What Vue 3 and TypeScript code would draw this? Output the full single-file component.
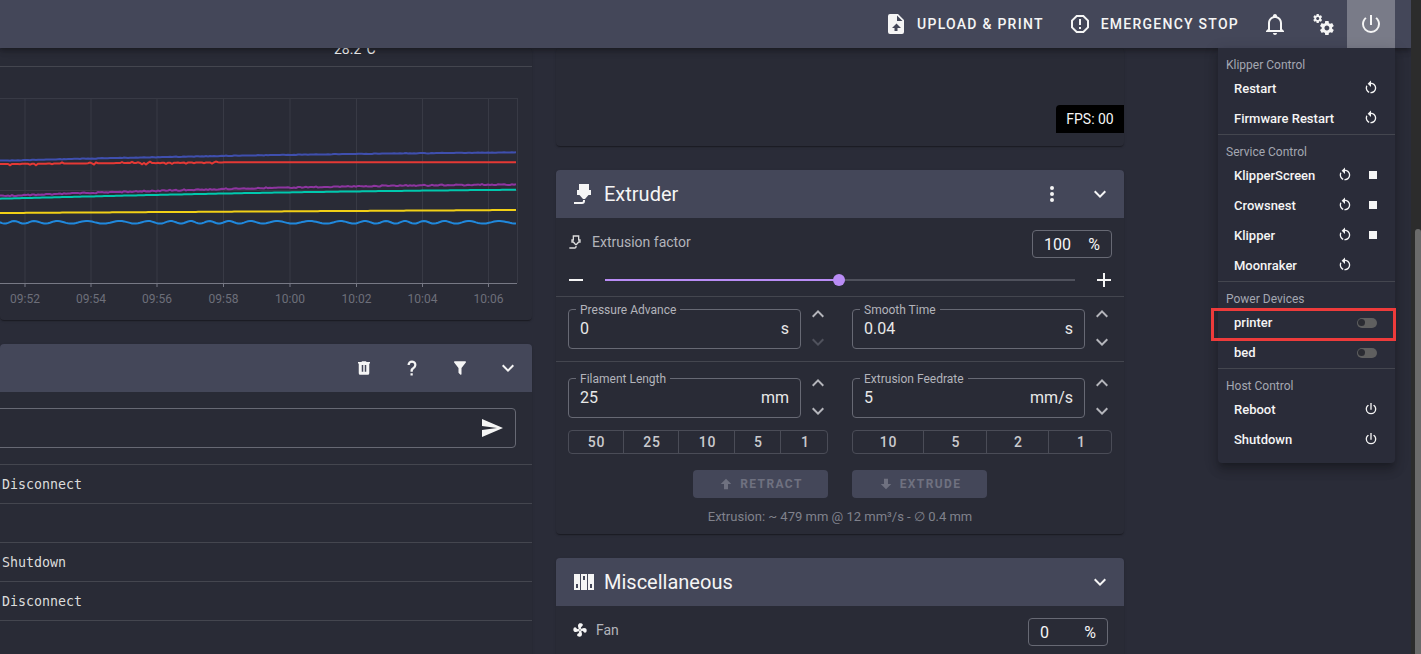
<script setup lang="ts">
// mdi paths
const icons = {
  upload: "M14,2H6A2,2 0 0,0 4,4V20A2,2 0 0,0 6,22H18A2,2 0 0,0 20,20V8L14,2M13.5,16V19H10.5V16H8L12.5,11.5L17,16H13.5M13,9V3.5L18.5,9H13Z",
  alert: "M8.27,3L3,8.27V15.73L8.27,21H15.73L21,15.73V8.27L15.73,3M9.1,5H14.9L19,9.1V14.9L14.9,19H9.1L5,14.9V9.1M11,15H13V17H11V15M11,7H13V13H11V7",
  bell: "M10 21H14C14 22.1 13.1 23 12 23S10 22.1 10 21M21 19V20H3V19L5 17V11C5 7.9 7 5.2 10 4.3V4C10 2.9 10.9 2 12 2S14 2.9 14 4V4.3C17 5.2 19 7.9 19 11V17L21 19M17 11C17 8.2 14.8 6 12 6S7 8.2 7 11V18H17V11Z",
  cogs: "M15.9,18.45C17.25,18.45 18.35,17.35 18.35,16C18.35,14.65 17.25,13.55 15.9,13.55C14.54,13.55 13.45,14.65 13.45,16C13.45,17.35 14.54,18.45 15.9,18.45M21.1,16.68L22.58,17.84C22.71,17.95 22.75,18.13 22.66,18.29L21.26,20.71C21.17,20.86 21,20.92 20.83,20.86L19.09,20.16C18.73,20.44 18.34,20.67 17.91,20.85L17.64,22.7C17.61,22.87 17.47,23 17.3,23H14.5C14.32,23 14.18,22.87 14.15,22.7L13.89,20.85C13.46,20.67 13.07,20.44 12.71,20.16L10.96,20.86C10.81,20.92 10.62,20.86 10.54,20.71L9.14,18.29C9.05,18.13 9.09,17.95 9.22,17.84L10.7,16.68L10.65,16L10.7,15.31L9.22,14.16C9.09,14.05 9.05,13.86 9.14,13.71L10.54,11.29C10.62,11.13 10.81,11.07 10.96,11.13L12.71,11.84C13.07,11.56 13.46,11.32 13.89,11.15L14.15,9.29C14.18,9.13 14.32,9 14.5,9H17.3C17.47,9 17.61,9.13 17.64,9.29L17.91,11.15C18.34,11.32 18.73,11.56 19.09,11.84L20.83,11.13C21,11.07 21.17,11.13 21.26,11.29L22.66,13.71C22.75,13.86 22.71,14.05 22.58,14.16L21.1,15.31L21.15,16L21.1,16.68M6.69,8.07C7.56,8.07 8.26,7.37 8.26,6.5C8.26,5.63 7.56,4.92 6.69,4.92A1.58,1.58 0 0,0 5.11,6.5C5.11,7.37 5.82,8.07 6.69,8.07M10.03,6.94L11,7.68C11.07,7.75 11.09,7.87 11.03,7.97L10.13,9.53C10.08,9.63 9.96,9.67 9.86,9.63L8.74,9.18L8,9.62L7.81,10.81C7.79,10.92 7.7,11 7.59,11H5.79C5.67,11 5.58,10.92 5.56,10.81L5.4,9.62L4.64,9.18L3.5,9.63C3.41,9.67 3.3,9.63 3.24,9.53L2.34,7.97C2.28,7.87 2.31,7.75 2.39,7.68L3.34,6.94L3.31,6.5L3.34,6.06L2.39,5.32C2.31,5.25 2.28,5.13 2.34,5.03L3.24,3.47C3.3,3.37 3.41,3.33 3.5,3.37L4.63,3.82L5.4,3.38L5.56,2.19C5.58,2.08 5.67,2 5.79,2H7.59C7.7,2 7.79,2.08 7.81,2.19L8,3.38L8.74,3.82L9.86,3.37C9.96,3.33 10.08,3.37 10.13,3.47L11.03,5.03C11.09,5.13 11.07,5.25 11,5.32L10.03,6.06L10.06,6.5L10.03,6.94Z",
  power: "M16.56,5.44L15.11,6.89C16.84,7.94 18,9.83 18,12A6,6 0 0,1 12,18A6,6 0 0,1 6,12C6,9.83 7.16,7.94 8.88,6.88L7.44,5.44C5.36,6.88 4,9.28 4,12A8,8 0 0,0 12,20A8,8 0 0,0 20,12C20,9.28 18.64,6.88 16.56,5.44M13,3H11V13H13",
  standby: "M13,3H11V13H13V3M17.83,5.17L16.41,6.59C18.05,7.91 19,9.9 19,12A7,7 0 0,1 12,19C8.12,19 5,15.88 5,12C5,9.93 5.94,7.92 7.58,6.59L6.17,5.17C4.22,6.82 3.08,9.25 3,12A9,9 0 0,0 12,21A9,9 0 0,0 21,12C21,9.25 19.78,6.82 17.83,5.17Z",
  restart: "M12,4C14.1,4 16.1,4.8 17.6,6.3C20.7,9.4 20.7,14.5 17.6,17.6C15.8,19.5 13.3,20.2 10.9,19.9L11.4,17.9C13.1,18.1 14.9,17.5 16.2,16.2C18.5,13.9 18.5,10.1 16.2,7.7C15.1,6.6 13.5,6 12,6V10.6L7,5.6L12,0.6V4M6.3,17.6C3.7,15 3.3,11 5.1,7.9L6.6,9.4C5.5,11.6 5.9,14.4 7.8,16.2C8.3,16.7 8.9,17.1 9.6,17.4L9,19.4C8,19 7.1,18.4 6.3,17.6Z",
  stop: "M18,18H6V6H18V18Z",
  dots: "M12,16A2,2 0 0,1 14,18A2,2 0 0,1 12,20A2,2 0 0,1 10,18A2,2 0 0,1 12,16M12,10A2,2 0 0,1 14,12A2,2 0 0,1 12,14A2,2 0 0,1 10,12A2,2 0 0,1 12,10M12,4A2,2 0 0,1 14,6A2,2 0 0,1 12,8A2,2 0 0,1 10,6A2,2 0 0,1 12,4Z",
  down: "M7.41,8.58L12,13.17L16.59,8.58L18,10L12,16L6,10L7.41,8.58Z",
  up: "M7.41,15.41L12,10.83L16.59,15.41L18,14L12,8L6,14L7.41,15.41Z",
  minus: "M19,13H5V11H19V13Z",
  plus: "M19,13H13V19H11V13H5V11H11V5H13V11H19V13Z",
  trash: "M9,3V4H4V6H5V19A2,2 0 0,0 7,21H17A2,2 0 0,0 19,19V6H20V4H15V3H9M9,8H11V17H9V8M13,8H15V17H13V8Z",
  help: "M10,19H13V22H10V19M12,2C17.35,2.22 19.68,7.62 16.5,11.67C15.67,12.67 14.33,13.33 13.67,14.17C13,15 13,16 13,17H10C10,15.33 10,13.92 10.67,12.92C11.33,11.92 12.67,11.33 13.5,10.67C15.92,8.43 15.32,5.26 12,5A3,3 0 0,0 9,8H6A6,6 0 0,1 12,2Z",
  filter: "M14,12V19.88C14.04,20.18 13.94,20.5 13.71,20.71C13.32,21.1 12.69,21.1 12.3,20.71L10.29,18.7C10.06,18.47 9.96,18.16 10,17.87V12H9.97L4.21,4.62C3.87,4.19 3.95,3.56 4.38,3.22C4.57,3.08 4.78,3 5,3H19C19.22,3 19.43,3.08 19.62,3.22C20.05,3.56 20.13,4.19 19.79,4.62L14.03,12H14Z",
  send: "M2,21L23,12L2,3V10L17,12L2,14V21Z",
  arrowUp: "M15,20H9V12H4.16L12,4.16L19.84,12H15V20Z",
  arrowDown: "M9,4H15V12H19.84L12,19.84L4.16,12H9V4Z",
  nozzle: "M7,2H17V8H19V13H16.5L13,17H11L7.5,13H5V8H7V2M10,22H2V20H10A1,1 0 0,0 11,19V18H13V19A3,3 0 0,1 10,22Z",
  nozzleOutline: "M7 2H17V8H19V13H16.5L13 17H11L7.5 13H5V8H7V2M10 22H2V20H10C10.6 20 11 19.6 11 19V18H13V19C13 20.7 11.7 22 10 22M7 10V11H8.5L12 15L15.5 11H17V10H15V4H9V10H7Z",
  dip: "M2,4H8V20H2V4M4,14V18H6V14H4M9,4H15V20H9V4M11,6V10H13V6H11M16,4H22V20H16V4M18,14V18H20V14H18Z",
  fan: "M12,11A1,1 0 0,0 11,12A1,1 0 0,0 12,13A1,1 0 0,0 13,12A1,1 0 0,0 12,11M12.5,2C17,2 17.11,5.57 14.75,6.75C13.76,7.24 13.32,8.29 13.13,9.22C13.61,9.42 14.03,9.73 14.35,10.13C18.05,8.13 22.03,8.92 22.03,12.5C22.03,17 18.46,17.1 17.28,14.73C16.78,13.74 15.72,13.3 14.79,13.11C14.59,13.59 14.28,14 13.88,14.34C15.87,18.03 15.08,22 11.5,22C7,22 6.91,18.42 9.27,17.24C10.25,16.75 10.69,15.71 10.89,14.79C10.4,14.59 9.97,14.27 9.65,13.87C5.96,15.85 2,15.07 2,11.5C2,7 5.56,6.89 6.74,9.26C7.24,10.25 8.29,10.68 9.22,10.87C9.41,10.39 9.73,9.97 10.14,9.65C8.15,5.96 8.94,2 12.5,2Z"
};

// chart
const ticks = [
  { x: 25, t: "09:52" }, { x: 91, t: "09:54" }, { x: 157, t: "09:56" }, { x: 223.5, t: "09:58" },
  { x: 290, t: "10:00" }, { x: 356.5, t: "10:02" }, { x: 422.5, t: "10:04" }, { x: 488.5, t: "10:06" }
];
function noise(x: number) {
  const n = Math.sin(x * 12.9898) * 43758.5453;
  return n - Math.floor(n);
}
function line(y0: number, y1: number, fn: (x: number) => number) {
  const pts: string[] = [];
  for (let x = 0; x <= 516; x += 2) {
    const y = y0 + (y1 - y0) * (x / 516) + fn(x);
    pts.push(x + "," + y.toFixed(1));
  }
  return pts.join(" ");
}
const bow = (x: number) => Math.sin((Math.PI * x) / 516);
const series = [
  { color: "#3f4fae", pts: line(160.7, 152.3, (x) => -1.2 * bow(x) + (noise(x) - 0.5) * 0.5) },
  { color: "#e53935", pts: line(162.3, 162.3, (x) => (x < 230 ? (1 - x / 230) * 1.7 + (noise(x) > 0.72 ? -1.2 + noise(x + 1) * 3 : 0) : 0)) },
  { color: "#8e35a0", pts: line(196, 184.3, (x) => -2 * bow(x) + (noise(x) - 0.5) * 1.2) },
  { color: "#00c8ae", pts: line(198.7, 189.7, (x) => -1.3 * bow(x)) },
  { color: "#f2d016", pts: line(213, 210, () => 0) },
  { color: "#2088dc", pts: line(222.3, 222.3, (x) => 1.3 * Math.sin(x * 0.26 + 2.4 * Math.sin(x * 0.031))) }
];

// extruder
const feedLengths = [{ v: "50", w: 55 }, { v: "25", w: 55 }, { v: "10", w: 56 }, { v: "5", w: 46 }, { v: "1", w: 48 }];
const feedRates = [{ v: "10", w: 71 }, { v: "5", w: 63 }, { v: "2", w: 62 }, { v: "1", w: 64 }];
const fieldsTop = [
  { label: "Pressure Advance", value: "0", unit: "s", downOff: true },
  { label: "Smooth Time", value: "0.04", unit: "s", downOff: false }
];
const fieldsBottom = [
  { label: "Filament Length", value: "25", unit: "mm", opts: feedLengths },
  { label: "Extrusion Feedrate", value: "5", unit: "mm/s", opts: feedRates }
];
const consoleRows = ["Disconnect", "", "Shutdown", "Disconnect", ""];

// power menu
const menu = [
  { title: "Klipper Control", rows: [
    { name: "Restart", icons: ["restart"] },
    { name: "Firmware Restart", icons: ["restart"] }
  ] },
  { title: "Service Control", rows: [
    { name: "KlipperScreen", icons: ["restart", "stop"] },
    { name: "Crowsnest", icons: ["restart", "stop"] },
    { name: "Klipper", icons: ["restart", "stop"] },
    { name: "Moonraker", icons: ["restart", "none"] }
  ] },
  { title: "Power Devices", rows: [
    { name: "printer", toggle: true, marked: true },
    { name: "bed", toggle: true }
  ] },
  { title: "Host Control", rows: [
    { name: "Reboot", icons: ["power"] },
    { name: "Shutdown", icons: ["power"] }
  ] }
] as { title: string; rows: { name: string; icons?: string[]; toggle?: boolean; marked?: boolean }[] }[];
const iconPath = (n: string) => (icons as Record<string, string>)[n];
</script>

<template>
  <div class="screen">
    <div class="page">
      <header class="topbar">
        <button class="top-btn upload">
          <svg class="i24" viewBox="0 0 24 24"><path :d="icons.upload" /></svg>
          <span>Upload &amp; Print</span>
        </button>
        <button class="top-btn">
          <svg class="i24" viewBox="0 0 24 24"><path :d="icons.alert" /></svg>
          <span>Emergency Stop</span>
        </button>
        <button class="top-icon"><svg class="i24" viewBox="0 0 24 24"><path :d="icons.bell" /></svg></button>
        <button class="top-icon"><svg class="i24" viewBox="0 0 24 24"><path :d="icons.cogs" /></svg></button>
        <button class="top-icon active"><svg class="i24" viewBox="0 0 24 24"><path :d="icons.standby" /></svg></button>
      </header>

      <main class="content">
        <section class="col left">
          <div class="card temp">
            <div class="temp-row"><span>28.2°C</span></div>
            <svg class="chart" width="532" height="253" viewBox="0 67 532 253">
              <line x1="0" x2="517" y1="98.5" y2="98.5" class="grid" />
              <line x1="0" x2="517" y1="190.5" y2="190.5" class="grid" />
              <line x1="517.5" x2="517.5" y1="98" y2="283" class="grid" />
              <g v-for="t in ticks" :key="t.t">
                <line :x1="t.x" :x2="t.x" y1="98" y2="283" class="grid" />
                <line :x1="t.x" :x2="t.x" y1="283" y2="287" class="axis" />
                <text :x="t.x" y="303" text-anchor="middle" class="tick">{{ t.t }}</text>
              </g>
              <line x1="0" x2="517" y1="283.5" y2="283.5" class="axis" />
              <polyline v-for="s in series" :key="s.color" :points="s.pts" :stroke="s.color" fill="none" stroke-width="2" />
            </svg>
          </div>

          <div class="card console">
            <div class="card-head">
              <span class="spacer"></span>
              <button class="head-btn"><svg class="i18" viewBox="0 0 24 24"><path :d="icons.trash" /></svg></button>
              <button class="head-btn"><svg class="i18" viewBox="0 0 24 24"><path :d="icons.help" /></svg></button>
              <button class="head-btn"><svg class="i18" viewBox="0 0 24 24"><path :d="icons.filter" /></svg></button>
              <button class="head-btn"><svg class="i24" viewBox="0 0 24 24"><path :d="icons.down" /></svg></button>
            </div>
            <div class="cmd-wrap">
              <div class="cmd"><svg class="i24" viewBox="0 0 24 24"><path :d="icons.send" /></svg></div>
            </div>
            <div v-for="(r, i) in consoleRows" :key="i" class="log-row">{{ r }}</div>
          </div>
        </section>

        <section class="col mid">
          <div class="card webcam">
            <div class="fps">FPS: 00</div>
          </div>

          <div class="card">
            <div class="card-head">
              <svg class="i24" viewBox="0 0 24 24"><path :d="icons.nozzle" /></svg>
              <h2>Extruder</h2>
              <span class="spacer"></span>
              <button class="head-btn"><svg class="i24" viewBox="0 0 24 24"><path :d="icons.dots" /></svg></button>
              <button class="head-btn"><svg class="i24" viewBox="0 0 24 24"><path :d="icons.down" /></svg></button>
            </div>

            <div class="factor">
              <div class="factor-top">
                <svg class="i16 muted-ico" viewBox="0 0 24 24"><path :d="icons.nozzleOutline" /></svg>
                <span class="factor-label">Extrusion factor</span>
                <span class="spacer"></span>
                <div class="mini-input"><span>100</span><span class="pct">%</span></div>
              </div>
              <div class="slider-row">
                <svg class="i24" viewBox="0 0 24 24"><path :d="icons.minus" /></svg>
                <div class="track"><div class="fill"><i class="thumb"></i></div></div>
                <svg class="i24" viewBox="0 0 24 24"><path :d="icons.plus" /></svg>
              </div>
            </div>

            <div class="field-row ruled">
              <div v-for="f in fieldsTop" :key="f.label" class="field-col">
                <div class="field-line">
                  <div class="field">
                    <label>{{ f.label }}</label>
                    <span>{{ f.value }}</span>
                    <span class="unit">{{ f.unit }}</span>
                  </div>
                  <div class="stepper">
                    <svg class="i24" viewBox="0 0 24 24"><path :d="icons.up" /></svg>
                    <svg class="i24" :class="{ off: f.downOff }" viewBox="0 0 24 24"><path :d="icons.down" /></svg>
                  </div>
                </div>
              </div>
            </div>

            <div class="field-row second">
              <div v-for="f in fieldsBottom" :key="f.label" class="field-col">
                <div class="field-line">
                  <div class="field">
                    <label>{{ f.label }}</label>
                    <span>{{ f.value }}</span>
                    <span class="unit">{{ f.unit }}</span>
                  </div>
                  <div class="stepper">
                    <svg class="i24" viewBox="0 0 24 24"><path :d="icons.up" /></svg>
                    <svg class="i24" viewBox="0 0 24 24"><path :d="icons.down" /></svg>
                  </div>
                </div>
                <div class="group">
                  <button v-for="o in f.opts" :key="o.v" :style="{ width: o.w + 'px' }">{{ o.v }}</button>
                </div>
              </div>
            </div>

            <div class="actions">
              <div class="action-side end">
                <button class="action"><svg class="i16" viewBox="0 0 24 24"><path :d="icons.arrowUp" /></svg>Retract</button>
              </div>
              <div class="action-side">
                <button class="action"><svg class="i16" viewBox="0 0 24 24"><path :d="icons.arrowDown" /></svg>Extrude</button>
              </div>
            </div>
            <p class="hint">Extrusion: ~ 479 mm @ 12 mm³/s - ∅ 0.4 mm</p>
          </div>

          <div class="card misc">
            <div class="card-head">
              <svg class="i24" viewBox="0 0 24 24"><path fill-rule="evenodd" :d="icons.dip" /></svg>
              <h2>Miscellaneous</h2>
              <span class="spacer"></span>
              <button class="head-btn"><svg class="i24" viewBox="0 0 24 24"><path :d="icons.down" /></svg></button>
            </div>
            <div class="fan-row">
              <svg class="i16" viewBox="0 0 24 24"><path :d="icons.fan" /></svg>
              <span class="factor-label">Fan</span>
              <span class="spacer"></span>
              <div class="mini-input"><span>0</span><span class="pct">%</span></div>
            </div>
          </div>
        </section>
      </main>

      <aside class="power-menu">
        <div v-for="g in menu" :key="g.title" class="menu-group">
          <div class="menu-title">{{ g.title }}</div>
          <div v-for="r in g.rows" :key="r.name" class="menu-row" :class="{ marked: r.marked }">
            <span class="menu-name">{{ r.name }}</span>
            <template v-if="r.icons">
              <span v-for="(ic, n) in r.icons" :key="n" class="menu-ico" :class="{ wide: r.icons.length > 1 }">
                <svg v-if="ic !== 'none'" class="i16" viewBox="0 0 24 24"><path :d="iconPath(ic)" /></svg>
              </span>
            </template>
            <span v-if="r.toggle" class="switch"><i></i></span>
          </div>
        </div>
      </aside>
    </div>

    <div class="scrollbar"><div class="thumb-bar"></div></div>
  </div>
</template>

<style scoped>
.screen {
  width: 1421px;
  height: 654px;
  display: flex;
  overflow: hidden;
  background: #2a2c38;
  color: #f5f5f5;
  font-family: Roboto, "Liberation Sans", sans-serif;
}
.page {
  position: relative;
  width: 1411px;
  height: 654px;
  overflow: hidden;
}
svg {
  fill: currentColor;
  display: block;
  flex: none;
}
button {
  background: none;
  border: 0;
  padding: 0;
  color: inherit;
  font: inherit;
}
.i24 { width: 24px; height: 24px; }
.i18 { width: 18px; height: 18px; }
.i16 { width: 16px; height: 16px; }
.spacer { flex: 1; }

.topbar {
  position: relative;
  z-index: 2;
  height: 48px;
  display: flex;
  justify-content: flex-end;
  padding-right: 16px;
  background: #444759;
  box-shadow: 0 2px 4px -1px rgba(0, 0, 0, .2), 0 4px 5px rgba(0, 0, 0, .14), 0 1px 10px rgba(0, 0, 0, .12);
}
.top-btn {
  display: flex;
  align-items: center;
  gap: 9px;
  padding: 0 12px 0 16px;
  font-size: 14px;
  font-weight: 500;
  letter-spacing: 1.25px;
  text-transform: uppercase;
}
.top-btn.upload { padding-right: 8px; }
.top-icon {
  width: 48px;
  height: 48px;
  display: flex;
  align-items: center;
  justify-content: center;
}
.top-icon.active { background: #797b88; }

.content {
  display: flex;
  gap: 24px;
}
.col {
  display: flex;
  flex-direction: column;
  gap: 24px;
  flex: none;
}
.left { width: 532px; }
.mid { width: 568px; }
.card {
  position: relative;
  background: #292b36;
  border-radius: 4px;
  box-shadow: 0 2px 1px -1px rgba(0, 0, 0, .2), 0 1px 1px rgba(0, 0, 0, .14), 0 1px 3px rgba(0, 0, 0, .12);
}
.temp { height: 272px; }
.temp-row {
  height: 8px;
  padding: 0 0 10px 334px;
  border-bottom: 1px solid #44464f;
  overflow: hidden;
  display: flex;
  align-items: flex-end;
  font-size: 14px;
  line-height: 14px;
}
.chart { display: block; }
.grid { stroke: #383a45; stroke-width: 1; }
.axis { stroke: #777985; stroke-width: 1; }
.tick { fill: #6d6f7a; font-size: 12px; font-family: Roboto, sans-serif; }

.card-head {
  height: 48px;
  display: flex;
  align-items: center;
  padding-left: 16px;
  background: #444759;
  border-radius: 4px 4px 0 0;
}
.card-head h2 {
  margin: 0 0 0 8px;
  font-size: 20px;
  font-weight: 400;
  color: #f5f5f5;
}
.head-btn {
  width: 48px;
  height: 48px;
  display: flex;
  align-items: center;
  justify-content: center;
}
.cmd-wrap { padding: 16px 16px 16px 0; }
.cmd {
  height: 38px;
  margin-left: -8px;
  border: 1px solid #676974;
  border-radius: 4px;
  display: flex;
  align-items: center;
  justify-content: flex-end;
  padding-right: 11px;
}
.log-row {
  height: 38px;
  line-height: 40px;
  border-top: 1px solid #44464f;
  padding-left: 2px;
  font-family: "DejaVu Sans Mono", "Liberation Mono", monospace;
  font-size: 13.3px;
  color: #dcdcdc;
}

.webcam { height: 98px; }
.fps {
  position: absolute;
  right: 0;
  top: 57px;
  width: 68px;
  height: 28px;
  background: #000;
  border-radius: 4px 0 0 0;
  font-size: 14px;
  line-height: 28px;
  text-align: center;
}

.factor {
  height: 79px;
  box-sizing: border-box;
  padding: 12px 12px 0;
  border-bottom: 1px solid #44464f;
}
.factor-top {
  display: flex;
  align-items: flex-start;
}
.factor-top > svg { margin-top: 4px; }
.muted-ico { color: #dcdcdc; }
.factor-label {
  margin-left: 8px;
  font-size: 14px;
  line-height: 24px;
  color: #b3b4bb;
}
.mini-input {
  width: 80px;
  height: 28px;
  box-sizing: border-box;
  display: flex;
  justify-content: space-between;
  align-items: center;
  padding: 0 11px;
  border: 1px solid #676974;
  border-radius: 4px;
  font-size: 16px;
}
.pct { font-size: 16px; }
.slider-row {
  display: flex;
  align-items: center;
  margin: 10px -4px 0;
  height: 24px;
}
.track {
  flex: 1;
  height: 2px;
  margin: 0 17px;
  background: #4f515c;
}
.fill {
  position: relative;
  width: 49.7%;
  height: 2px;
  background: #b98cf5;
}
.thumb {
  position: absolute;
  right: -6px;
  top: -5px;
  width: 12px;
  height: 12px;
  border-radius: 50%;
  background: #b98cf5;
}
.field-row {
  display: flex;
  gap: 24px;
  padding: 12px 12px;
}
.field-row.ruled { border-bottom: 1px solid #44464f; }
.field-row.second { padding: 16px 12px 0; }
.field-col { width: 260px; }
.field-line { display: flex; }
.field {
  position: relative;
  width: 233px;
  height: 40px;
  box-sizing: border-box;
  flex: none;
  display: flex;
  justify-content: space-between;
  align-items: center;
  padding: 0 11px;
  border: 1px solid #676974;
  border-radius: 4px;
  font-size: 16px;
  line-height: 16px;
  color: #e8e8e8;
}
.field label {
  position: absolute;
  left: 7px;
  top: -7px;
  padding: 0 4px;
  background: #292b36;
  font-size: 12px;
  line-height: 14px;
  color: #b3b4bb;
}
.stepper {
  width: 27px;
  height: 40px;
  margin-top: -1px;
  display: flex;
  flex-direction: column;
  justify-content: center;
  align-items: flex-end;
  gap: 4px;
  color: #b5b6bc;
}
.stepper svg { margin-right: -2px; }
.stepper .off { color: #50525d; }
.group {
  display: flex;
  height: 24px;
  margin-top: 12px;
  box-sizing: border-box;
  border: 1px solid #4a4c57;
  border-radius: 4px;
}
.group button {
  flex: none;
  box-sizing: border-box;
  padding-left: 2px;
  border-left: 1px solid #4a4c57;
  font-size: 14px;
  font-weight: 500;
  letter-spacing: .8px;
  color: #c9cace;
}
.group button:first-child { border-left: 0; margin-left: -1px; }
.actions {
  display: flex;
  gap: 24px;
  margin-top: 16px;
  padding: 0 12px;
}
.action-side { width: 260px; display: flex; }
.action-side.end { justify-content: flex-end; }
.action {
  width: 135px;
  height: 28px;
  background: #444759;
  border-radius: 4px;
  display: flex;
  align-items: center;
  justify-content: center;
  gap: 6px;
  font-size: 12px;
  font-weight: 700;
  letter-spacing: 1.4px;
  text-transform: uppercase;
  color: #6f7180;
}
.hint {
  margin: 0;
  height: 36px;
  line-height: 38px;
  text-align: center;
  font-size: 13px;
  color: #80828c;
}
.fan-row {
  display: flex;
  align-items: flex-start;
  padding: 12px 16px;
}
.fan-row > svg { margin-top: 4px; }

.power-menu {
  position: absolute;
  z-index: 3;
  top: 48px;
  right: 16px;
  width: 177px;
  padding-bottom: 9px;
  background: #2a2c39;
  border-radius: 0 0 4px 4px;
  box-shadow: 0 5px 5px -3px rgba(0, 0, 0, .2), 0 8px 10px 1px rgba(0, 0, 0, .14), 0 3px 14px 2px rgba(0, 0, 0, .12);
}
.menu-group + .menu-group {
  border-top: 1px solid #44464f;
  margin-top: 1px;
}
.menu-title {
  height: 25px;
  padding: 9px 0 0 8px;
  box-sizing: border-box;
  font-size: 12px;
  line-height: 17px;
  color: #a4a7b1;
}
.menu-row {
  position: relative;
  height: 30px;
  display: flex;
  align-items: center;
  padding: 0 16px;
  font-size: 13px;
}
.menu-row.marked::after {
  content: "";
  position: absolute;
  inset: 1px -1px -4px -7px;
  border: 3px solid #ee3b3b;
  pointer-events: none;
}
.menu-name {
  flex: 1;
  font-weight: 500;
  color: #f5f5f5;
}
.menu-ico {
  width: 16px;
  height: 16px;
}
.menu-ico.wide { width: 28px; display: flex; justify-content: center; transform: translateX(2px); }
.menu-row .menu-ico.wide:last-child { margin-right: -6px; }
.switch {
  position: relative;
  width: 20px;
  height: 10px;
  margin: 1px 2px 0 0;
  border-radius: 5px;
  background: #5f5f5f;
}
.switch i {
  position: absolute;
  left: 1px;
  top: 1.5px;
  width: 7px;
  height: 7px;
  border-radius: 50%;
  background: #2b2c33;
}

.scrollbar {
  width: 10px;
  height: 654px;
  display: flex;
  flex-direction: column;
  justify-content: flex-end;
  background: #2c2c2c;
}
.thumb-bar {
  height: 425px;
  margin-left: 4px;
  background: #6b6b6b;
  border-radius: 3px 3px 0 0;
}
</style>

<style>
html, body { margin: 0; background: #2a2c38; }
</style>
